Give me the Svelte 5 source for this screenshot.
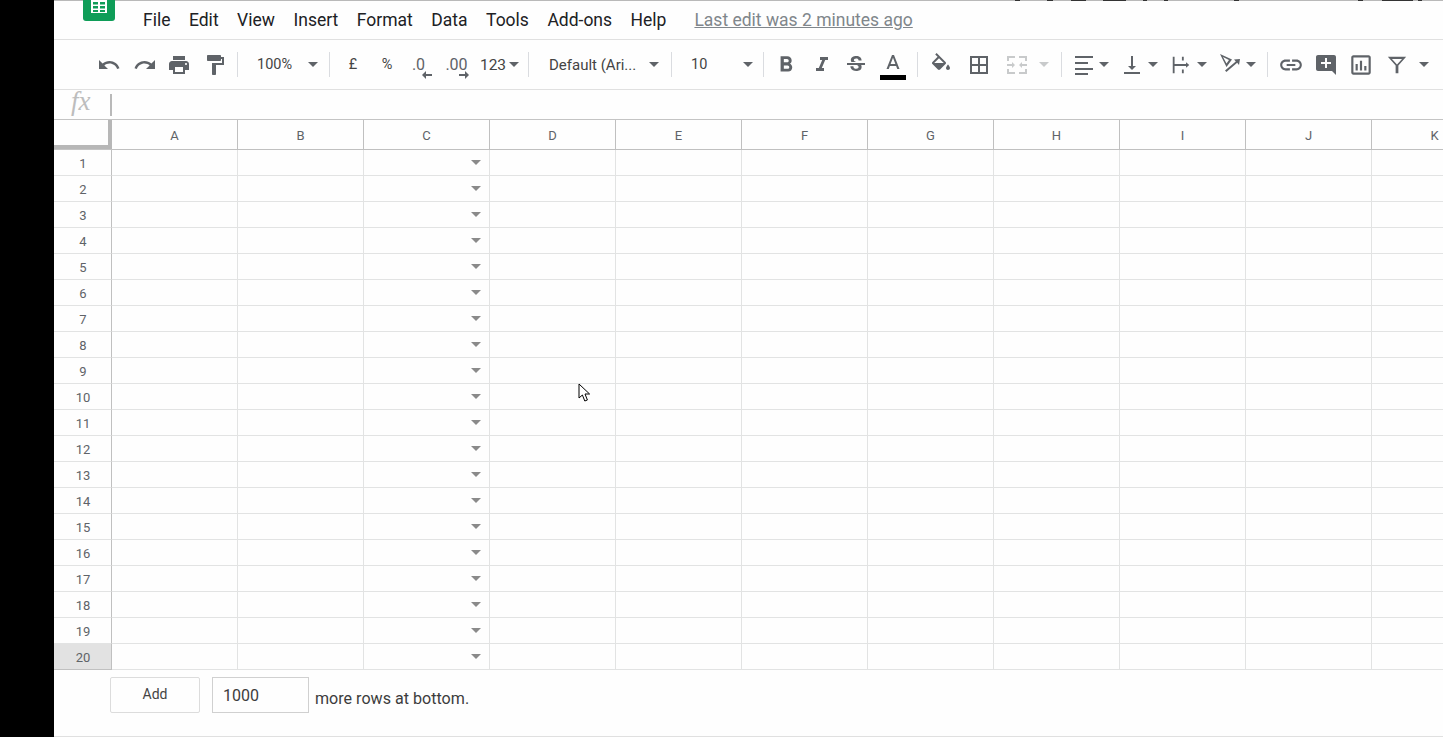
<script>
	const menus = ['File', 'Edit', 'View', 'Insert', 'Format', 'Data', 'Tools', 'Add-ons', 'Help'];
	const cols = ['A', 'B', 'C', 'D', 'E', 'F', 'G', 'H', 'I', 'J', 'K'];
	const rows = Array.from({ length: 20 }, (_, i) => i + 1);

	const ic = {
		undo: 'M12.5 8c-2.65 0-5.05.99-6.9 2.6L2 7v9h9l-3.62-3.62c1.39-1.16 3.16-1.88 5.12-1.88 3.54 0 6.55 2.31 7.6 5.5l2.37-.78C21.08 11.03 17.15 8 12.5 8z',
		redo: 'M18.4 10.6C16.55 8.99 14.15 8 11.5 8c-4.65 0-8.58 3.03-9.96 7.22L3.9 16c1.05-3.19 4.05-5.5 7.6-5.5 1.95 0 3.73.72 5.12 1.88L13 16h9V7l-3.6 3.6z',
		print: 'M19 8H5c-1.66 0-3 1.34-3 3v6h4v4h12v-4h4v-6c0-1.66-1.34-3-3-3zm-3 11H8v-5h8v5zm3-7c-.55 0-1-.45-1-1s.45-1 1-1 1 .45 1 1-.45 1-1 1zm-1-9H6v4h12V3z',
		paint: 'M18 4V3c0-.55-.45-1-1-1H5c-.55 0-1 .45-1 1v4c0 .55.45 1 1 1h12c.55 0 1-.45 1-1V6h1v4H9v11c0 .55.45 1 1 1h2c.55 0 1-.45 1-1v-9h8V4h-3z',
		bold: 'M15.6 10.79c.97-.67 1.65-1.77 1.65-2.79 0-2.26-1.75-4-4-4H7v14h7.04c2.09 0 3.71-1.7 3.71-3.79 0-1.52-.86-2.82-2.15-3.42zM10 6.5h3c.83 0 1.5.67 1.5 1.5s-.67 1.5-1.5 1.5h-3v-3zm3.5 9H10v-3h3.5c.83 0 1.5.67 1.5 1.5s-.67 1.5-1.5 1.5z',
		italic: 'M10 4v3h2.21l-3.42 8H6v3h8v-3h-2.21l3.42-8H18V4z',
		strike: 'M6.85 7.08C6.85 4.37 9.45 3 12.24 3c1.64 0 3 .49 3.9 1.28.77.65 1.46 1.73 1.46 3.24h-3.01c0-.31-.05-.59-.15-.85-.29-.86-1.2-1.28-2.25-1.28-1.86 0-2.34 1.02-2.34 1.7 0 .48.25.88.74 1.21.38.25.77.48 1.41.7H7.39c-.21-.34-.54-.89-.54-1.92zM21 12v-2H3v2h9.62c1.15.45 1.96.75 1.96 1.97 0 1-.81 1.67-2.28 1.67-1.54 0-2.93-.54-2.93-2.51H6.4c0 .55.08 1.13.24 1.58.81 2.29 3.29 3.3 5.67 3.3 2.27 0 5.3-.89 5.3-4.05 0-.3-.01-1.16-.48-1.94H21V12z',
		fill: 'M16.56 8.94L7.62 0 6.21 1.41l2.38 2.38-5.15 5.15c-.59.59-.59 1.54 0 2.12l5.5 5.5c.29.29.68.44 1.06.44s.77-.15 1.06-.44l5.5-5.5c.59-.58.59-1.53 0-2.12zM5.21 10L10 5.21 14.79 10H5.21zM19 11.5s-2 2.17-2 3.5c0 1.1.9 2 2 2s2-.9 2-2c0-1.33-2-3.5-2-3.5z',
		borders: 'M3 3v18h18V3H3zm8 16H5v-6h6v6zm0-8H5V5h6v6zm8 8h-6v-6h6v6zm0-8h-6V5h6v6z',
		merge: 'M2 3h8v2H4v3H2zM14 3h8v5h-2V5h-6zM2 16h2v3h6v2H2zM20 16h2v5h-8v-2h6zM2 11h5V9l3 3-3 3v-2H2zM22 11h-5V9l-3 3 3 3v-2h5z',
		align: 'M2 3h18v2H2zM2 9h13v2H2zM2 15h18v2H2zM2 20h13v2H2z',
		valign: 'M16 13h-3V3h-2v10H8l4 4 4-4zM4 19v2h16v-2H4z',
		wrap: 'M3 3h2v18H3zM13 3h2v4h-2zM13 17h2v4h-2zM5 11h12.500V9l3.500 3-3.500 3v-2H5z',
		rotate: 'M2 1l12 5.500L8.500 14zM5 4l3.500 6.500 2.500-3.500zM7 17.500l1.400 1.500L19.200 9.800 21 12l1-6-6 .5 1.800 1.900z',
		link: 'M3.9 12c0-1.71 1.39-3.1 3.1-3.1h4V7H7c-2.76 0-5 2.24-5 5s2.24 5 5 5h4v-1.9H7c-1.71 0-3.1-1.39-3.1-3.1zM8 13h8v-2H8v2zm9-6h-4v1.9h4c1.71 0 3.1 1.39 3.1 3.1s-1.39 3.1-3.1 3.1h-4V17h4c2.76 0 5-2.24 5-5s-2.24-5-5-5z',
		comment: 'M21.99 4c0-1.1-.89-2-1.99-2H4c-1.1 0-2 .9-2 2v12c0 1.1.9 2 2 2h14l4 4-.01-18zM17 11h-4v4h-2v-4H7V9h4V5h2v4h4v2z',
		chart: 'M9 17H7v-6h2v6zm4 0h-2V8h2v9zm4 0h-2v-4h2v4zm2 2H5V5h14v14zm0-16H5c-1.1 0-2 .9-2 2v14c0 1.1.9 2 2 2h14c1.1 0 2-.9 2-2V5c0-1.1-.9-2-2-2z',
		filter: 'M2 3h20l-8.500 9.500V21h-3v-8.500zM6.500 5.500l5.500 6 5.500-6z'
	};

	// w = width of the toolbar slot, ml = extra space before it
	const tools = [
		{ icon: 'undo', w: 36 },
		{ icon: 'redo', w: 36 },
		{ icon: 'print', w: 32 },
		{ icon: 'paint', w: 40 },
		{ sep: true, w: 5 },
		{ text: '100%', w: 60, cls: 'left', pad: 17 },
		{ caret: true, w: 26 },
		{ sep: true, w: 7 },
		{ text: '£', w: 40 },
		{ text: '%', w: 28 },
		{ dec: '.0', arrow: 21, dir: 'l', w: 35 },
		{ dec: '.00', arrow: 23, dir: 'r', w: 41 },
		{ text: '123', w: 32, cls: 'num' },
		{ caret: true, w: 9 },
		{ sep: true, w: 21 },
		{ text: 'Default (Ari...', w: 105, cls: 'left font', pad: 10 },
		{ caret: true, w: 20 },
		{ sep: true, w: 15 },
		{ text: '10', w: 59, cls: 'left', pad: 12 },
		{ caret: true, w: 20 },
		{ sep: true, w: 11 },
		{ icon: 'bold', w: 34, size: 26 },
		{ icon: 'italic', w: 38 },
		{ icon: 'strike', w: 30 },
		{ color: true, w: 44 },
		{ sep: true, w: 5 },
		{ icon: 'fill', w: 42 },
		{ icon: 'borders', w: 34 },
		{ icon: 'merge', w: 42, cls: 'off' },
		{ caret: true, w: 12, off: true },
		{ sep: true, w: 23 },
		{ icon: 'align', w: 24 },
		{ caret: true, w: 14 },
		{ icon: 'valign', w: 24, ml: 9 },
		{ caret: true, w: 18 },
		{ icon: 'wrap', w: 22, size: 22, ml: 8 },
		{ caret: true, w: 20 },
		{ icon: 'rotate', w: 24, ml: 6 },
		{ caret: true, w: 18 },
		{ sep: true, w: 15 },
		{ icon: 'link', w: 32, size: 26 },
		{ icon: 'comment', w: 38 },
		{ icon: 'chart', w: 32, size: 26 },
		{ icon: 'filter', w: 40, size: 22 },
		{ caret: true, w: 14 }
	];
</script>

{#snippet glyph(name, size = 24)}
	<svg viewBox="0 0 24 24" width={size} height={size} fill-rule="evenodd"><path d={ic[name]} /></svg>
{/snippet}

<div class="page">
	<aside class="black"></aside>
	<main>
		<div class="topline"></div>
		<header class="menubar">
			<div class="logo">
				<svg viewBox="0 0 32 21" width="32" height="21">
					<path d="M0 0h32v18a3 3 0 0 1-3 3H3a3 3 0 0 1-3-3z" fill="#0f9d58" />
					<path d="M8 0h16v13H8z" fill="#fff" />
					<path d="M10 2h5v2.500h-5zM17 2h5v2.500h-5zM10 6h5v2.500h-5zM17 6h5v2.500h-5zM10 10h5v2h-5zM17 10h5v2h-5z" fill="#0f9d58" />
				</svg>
			</div>
			<nav>
				{#each menus as m}<span>{m}</span>{/each}
			</nav>
			<span class="lastedit">Last edit was 2 minutes ago</span>
		</header>

		<div class="toolbar">
			{#each tools as t}
				{#if t.sep}
					<span class="slot" style="width:{t.w}px"><i class="sep"></i></span>
				{:else if t.caret}
					<span class="slot" class:off={t.off} style="width:{t.w}px"><i class="caret"></i></span>
				{:else if t.icon}
					<span class="slot {t.cls ?? ''}" style="width:{t.w}px;margin-left:{t.ml ?? 0}px">{@render glyph(t.icon, t.size)}</span>
				{:else if t.color}
					<span class="slot colorbtn" style="width:{t.w}px">
						<svg viewBox="0 0 24 24" width="24" height="24"><path d="M11 3L5.500 17h2.250l1.120-3h6.250l1.120 3h2.250L13 3h-2zm-1.380 9L12 5.670 14.380 12H9.620z" /></svg>
						<i class="colorbar"></i>
					</span>
				{:else if t.dec}
					<span class="slot dec" style="width:{t.w}px">
						<span class="dectext">{t.dec}</span>
						<svg class="decarrow {t.dir}" style="left:{t.arrow}px" viewBox="0 0 10 8" width="10" height="8"><path d="M0 3h6V0l4 4-4 4V5H0z" /></svg>
					</span>
				{:else}
					<span class="slot txt {t.cls ?? ''}" style="width:{t.w}px;padding-left:{t.pad ?? 0}px">{t.text}</span>
				{/if}
			{/each}
		</div>

		<div class="formula">
			<span class="fx">fx</span>
			<i class="fxbar"></i>
		</div>

		<div class="sheet">
			<div class="corner"></div>
			{#each cols as c}<div class="colhead">{c}</div>{/each}
			{#each rows as r}
				<div class="rowhead" class:sel={r === 20}>{r}</div>
				{#each cols as c}
					<div class="cell">{#if c === 'C'}<i class="dv"></i>{/if}</div>
				{/each}
			{/each}
		</div>

		<div class="addrow">
			<button>Add</button>
			<span class="count">1000</span>
			<span class="more">more rows at bottom.</span>
		</div>
	</main>

	<svg class="cursor" viewBox="0 0 14 20" width="14" height="20">
		<path d="M1 1v14l3.400-3 2.400 6 2.600-1-2.400-6h4.600z" fill="#fff" stroke="#000" stroke-width="1" />
	</svg>
</div>

<style>
	:global(body) {
		margin: 0;
		overflow: hidden;
		background: #fefefe;
	}
	.page {
		display: flex;
		width: 1443px;
		height: 737px;
		font-family: Roboto, 'Liberation Sans', sans-serif;
		position: relative;
		overflow: hidden;
	}
	.black {
		width: 54px;
		flex: none;
		background: #000;
	}
	main {
		flex: 1;
		min-width: 0;
		display: flex;
		flex-direction: column;
		background: #fefefe;
		border-bottom: 1px solid #e0e0e0;
		overflow: hidden;
	}
	.topline {
		height: 1px;
		flex: none;
		background: linear-gradient(90deg, #b9b9b9 0 961px, #333 961px 966px, #b9b9b9 966px 993px, #333 993px 999px, #b9b9b9 999px 1017px, #333 1017px 1032px, #b9b9b9 1032px 1049px, #333 1049px 1072px, #b9b9b9 1072px 1089px, #333 1089px 1093px, #b9b9b9 1093px 1110px, #333 1110px 1114px, #b9b9b9 1114px 1180px, #333 1180px 1185px, #b9b9b9 1185px 1304px, #333 1304px 1309px, #b9b9b9 1309px 1328px, #333 1328px 1359px, #b9b9b9 1359px 1364px, #333 1364px 1368px, #b9b9b9 1368px);
	}
	.menubar {
		height: 38px;
		flex: none;
		display: flex;
		align-items: flex-start;
		border-bottom: 1px solid #e0e0e0;
		position: relative;
	}
	.logo {
		width: 32px;
		margin-left: 29px;
		height: 21px;
		margin-top: -1px;
	}
	.logo svg {
		display: block;
	}
	nav {
		display: flex;
		margin-left: 28px;
		gap: 18.5px;
		font-size: 17.5px;
		line-height: 38px;
		color: #202124;
	}
	.lastedit {
		margin-left: 28px;
		font-size: 17.5px;
		line-height: 38px;
		color: #80868b;
		text-decoration: underline;
	}
	.toolbar {
		height: 49px;
		flex: none;
		display: flex;
		align-items: center;
		padding-left: 37px;
		border-bottom: 1px solid #e0e0e0;
		fill: #5f6368;
		color: #5f6368;
	}
	.slot {
		flex: none;
		height: 40px;
		display: flex;
		align-items: center;
		justify-content: center;
		box-sizing: border-box;
		position: relative;
	}
	.slot svg {
		display: block;
	}
	.sep {
		width: 1px;
		height: 25px;
		background: #dadce0;
	}
	.caret {
		width: 0;
		height: 0;
		flex: none;
		border-left: 5px solid transparent;
		border-right: 5px solid transparent;
		border-top: 5px solid #5f6368;
	}
	.off {
		fill: #c8cacb;
	}
	.off .caret {
		border-top-color: #c8cacb;
	}
	.txt {
		font-size: 14.5px;
		color: #444;
		white-space: nowrap;
	}
	.txt.left {
		justify-content: flex-start;
	}
	.txt.num {
		font-size: 15.5px;
	}
	.txt.font {
		font-size: 15px;
	}
	.colorbtn {
		flex-direction: column;
		justify-content: flex-start;
		padding-top: 7px;
	}
	.colorbar {
		position: absolute;
		left: 9px;
		top: 30px;
		width: 26px;
		height: 5px;
		background: #000;
	}
	.dec {
		font-size: 16px;
		color: #5f6368;
	}
	.dectext {
		margin-top: -1px;
	}
	.decarrow {
		position: absolute;
		top: 26px;
	}
	.decarrow.l {
		transform: rotate(180deg);
	}
	.formula {
		height: 29px;
		display: flex;
		align-items: center;
		flex: none;
	}
	.fx {
		font-family: 'Liberation Serif', serif;
		font-style: italic;
		font-size: 27px;
		line-height: 29px;
		color: #bdbdbd;
		margin-left: 17px;
		margin-top: -6px;
		width: 39px;
	}
	.fxbar {
		width: 1.5px;
		height: 22px;
		background: #b9b9b9;
	}
	.sheet {
		display: grid;
		flex: none;
		grid-template-columns: 58px repeat(11, 126px);
		grid-template-rows: 30px repeat(20, 26px);
		border-top: 1px solid #c4c4c4;
	}
	.corner {
		box-sizing: border-box;
		border-right: 4px solid #b7b7b7;
		border-bottom: 4px solid #b7b7b7;
		margin-bottom: 1px;
		box-shadow: 0 1px 0 #c4c4c4;
	}
	.colhead {
		box-sizing: border-box;
		border-right: 1px solid #c0c0c0;
		border-bottom: 1px solid #c0c0c0;
		font-size: 13px;
		color: #5f6368;
		display: flex;
		align-items: center;
		justify-content: center;
		padding-top: 1px;
	}
	.rowhead {
		box-sizing: border-box;
		border-right: 1px solid #c0c0c0;
		border-bottom: 1px solid #e2e3e3;
		font-size: 13px;
		color: #5f6368;
		display: flex;
		align-items: center;
		justify-content: center;
		padding-top: 1px;
		padding-left: 1px;
	}
	.rowhead.sel {
		background: #e2e2e2;
		border-bottom-color: #c0c0c0;
	}
	.cell {
		box-sizing: border-box;
		border-right: 1px solid #e2e3e3;
		border-bottom: 1px solid #e2e3e3;
		display: flex;
		align-items: center;
		justify-content: flex-end;
		padding-right: 8px;
	}
	.dv {
		width: 0;
		height: 0;
		border-left: 5px solid transparent;
		border-right: 5px solid transparent;
		border-top: 5px solid #8a8a8a;
		margin-bottom: 1px;
	}
	.addrow {
		display: flex;
		align-items: flex-start;
		padding: 7px 0 0 56px;
	}
	button {
		width: 90px;
		height: 36px;
		box-sizing: border-box;
		background: #fefefe;
		border: 1px solid #dcdcdc;
		border-radius: 2px;
		font: 400 14px Roboto, sans-serif;
		color: #444;
		padding: 0 0 2px;
	}
	.count {
		box-sizing: border-box;
		width: 97px;
		height: 36px;
		margin-left: 12px;
		border: 1px solid #d0d0d0;
		padding-left: 10px;
		font-size: 16px;
		line-height: 35px;
		color: #3c3c3c;
	}
	.more {
		margin-left: 6px;
		font-size: 16.1px;
		line-height: 43px;
		color: #3c3c3c;
	}
	.cursor {
		position: absolute;
		left: 578px;
		top: 383px;
	}
</style>
